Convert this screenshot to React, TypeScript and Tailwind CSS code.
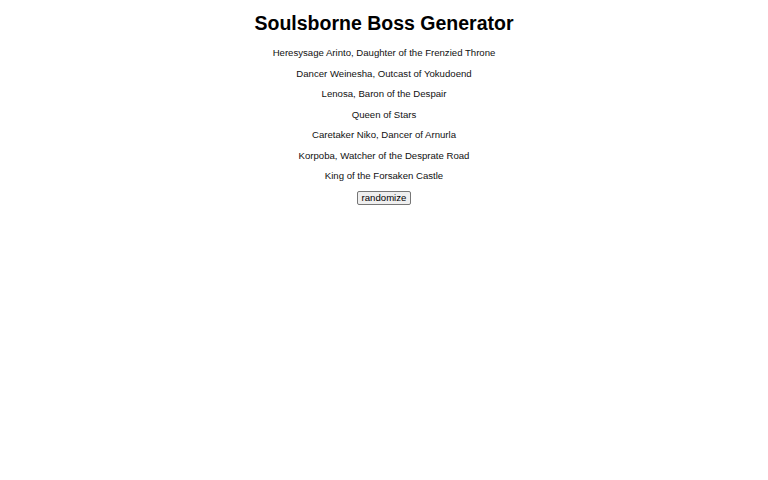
const BOSSES = [
  'Heresysage Arinto, Daughter of the Frenzied Throne',
  'Dancer Weinesha, Outcast of Yokudoend',
  'Lenosa, Baron of the Despair',
  'Queen of Stars',
  'Caretaker Niko, Dancer of Arnurla',
  'Korpoba, Watcher of the Desprate Road',
  'King of the Forsaken Castle',
]

export default function App() {
  return (
    <div className="min-h-screen bg-white text-black font-['Liberation_Sans',Arial,sans-serif]">
      <div className="flex flex-col items-center pt-[11px]">
        <h1 className="text-[19.5px] font-bold leading-[24px]">Soulsborne Boss Generator</h1>
        <div className="mt-[12px] flex flex-col items-center gap-[8.5px]">
          {BOSSES.map((name, i) => (
            <p key={i} className="text-[9.6px] leading-[12px] text-[#111]">{name}</p>
          ))}
        </div>
        <button className="mt-[9px] px-[4px] h-[14px] text-[9.6px] leading-[12px] bg-[#efefef] border border-[#767676] rounded-[2px]">
          randomize
        </button>
      </div>
    </div>
  )
}
